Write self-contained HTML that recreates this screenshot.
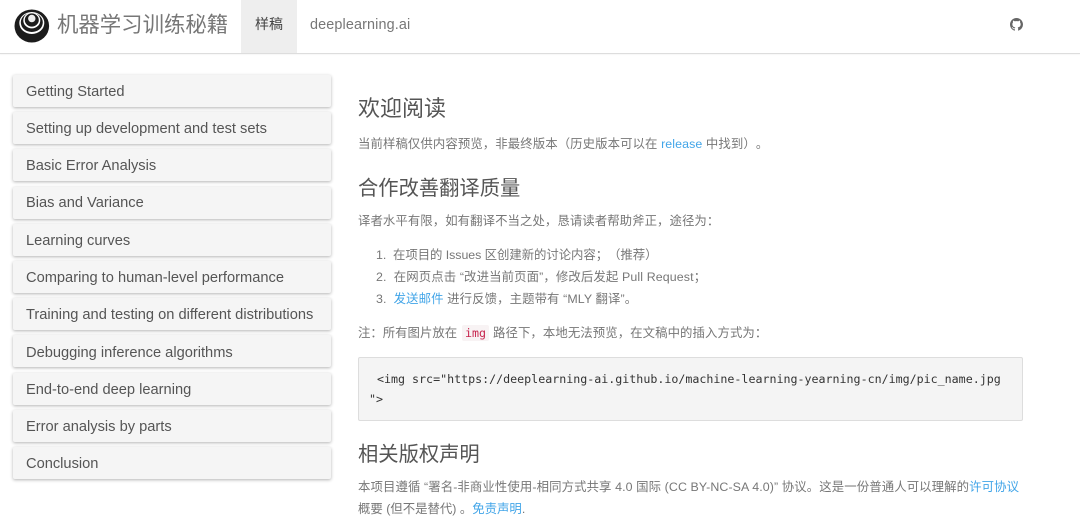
<!DOCTYPE html>
<html lang="zh">
<head>
<meta charset="utf-8">
<title>机器学习训练秘籍</title>
<style>
html,body{margin:0;padding:0;background:#fff;}
body{width:1080px;height:523px;position:relative;overflow:hidden;font-family:"Liberation Sans","Noto Sans CJK SC",sans-serif;color:#666;text-spacing-trim:space-all;filter:blur(.25px);}
.a{position:absolute;white-space:nowrap;}
.nav{left:0;top:0;width:1080px;height:53px;background:#fff;border-bottom:1px solid #ddd;box-shadow:0 1px 1px rgba(0,0,0,.04);}
.tab{left:241px;top:0;width:56px;height:53px;background:#eee;}
.item{left:13px;width:318px;height:32px;background:#f5f5f5;box-shadow:0 1px 3px rgba(0,0,0,.3);border-radius:2px;}
.t{left:26px;font-size:14.65px;line-height:20px;color:#555;}
h1,h2{margin:0;font-weight:400;color:#555;line-height:28px;position:absolute;white-space:nowrap;left:358px;}
h1{font-size:22px;}
h2{font-size:20.3px;}
.p{font-size:12.4px;line-height:18px;left:358px;color:#777;}
a{color:#42a5e8;text-decoration:none;}
.code{left:358px;top:357px;width:663px;height:62px;background:#f4f4f4;border:1px solid #ddd;border-radius:2px;}
.m{font-family:"DejaVu Sans Mono",monospace;font-size:11.65px;line-height:20px;color:#333;}
.img{left:462px;top:325px;width:27px;height:16px;background:#f8f3f4;border-radius:2px;text-align:center;line-height:16px;color:#c7254e;font-family:"DejaVu Sans Mono",monospace;font-size:11.65px;}
</style>
</head>
<body>
<div class="a nav"></div>
<div class="a tab"></div>
<svg class="a" style="left:14px;top:8px" width="36" height="36" viewBox="0 0 36 36">
<ellipse cx="17.8" cy="18" rx="17.3" ry="16.5" fill="#1c1c1c"/>
<ellipse cx="17.8" cy="15" rx="12.5" ry="11" fill="#fff"/>
<ellipse cx="17.8" cy="14.4" rx="11" ry="9.6" fill="#1c1c1c"/>
<ellipse cx="17.8" cy="12.4" rx="8.5" ry="8" fill="#fff"/>
<ellipse cx="17.8" cy="12" rx="7" ry="6.6" fill="#1c1c1c"/>
<circle cx="17.8" cy="10.5" r="3.7" fill="#eee"/>
</svg>
<div class="a" style="left:57px;top:10px;font-size:21.4px;line-height:30px;color:#777;">机器学习训练秘籍</div>
<div class="a" style="left:255px;top:15px;font-size:14px;line-height:18px;color:#444;">样稿</div>
<div class="a" style="left:310px;top:15px;font-size:14.4px;line-height:20px;color:#777;letter-spacing:.13px;">deeplearning.ai</div>
<svg class="a" style="left:1010px;top:17.5px" width="13" height="13" viewBox="0 0 16 16"><path fill="#666" d="M8 0C3.58 0 0 3.58 0 8c0 3.54 2.29 6.53 5.47 7.59.4.07.55-.17.55-.38 0-.19-.01-.82-.01-1.49-2.01.37-2.53-.49-2.69-.94-.09-.23-.48-.94-.82-1.13-.28-.15-.68-.52-.01-.53.63-.01 1.08.58 1.23.82.72 1.21 1.87.87 2.33.66.07-.52.28-.87.51-1.07-1.78-.2-3.64-.89-3.64-3.95 0-.87.31-1.59.82-2.15-.08-.2-.36-1.02.08-2.12 0 0 .67-.21 2.2.82.64-.18 1.32-.27 2-.27s1.36.09 2 .27c1.53-1.04 2.2-.82 2.2-.82.44 1.1.16 1.92.08 2.12.51.56.82 1.27.82 2.15 0 3.07-1.87 3.75-3.65 3.95.29.25.54.73.54 1.48 0 1.07-.01 1.93-.01 2.2 0 .21.15.46.55.38A8.01 8.01 0 0 0 16 8c0-4.42-3.58-8-8-8z"/></svg>

<div class="a item" style="top:75px"></div><div class="a t" style="top:82px">Getting Started</div>
<div class="a item" style="top:112.2px"></div><div class="a t" style="top:119px">Setting up development and test sets</div>
<div class="a item" style="top:149.4px"></div><div class="a t" style="top:156px">Basic Error Analysis</div>
<div class="a item" style="top:186.6px"></div><div class="a t" style="top:193px">Bias and Variance</div>
<div class="a item" style="top:223.8px"></div><div class="a t" style="top:231px">Learning curves</div>
<div class="a item" style="top:261px"></div><div class="a t" style="top:268px">Comparing to human-level performance</div>
<div class="a item" style="top:298.2px"></div><div class="a t" style="top:305px">Training and testing on different distributions</div>
<div class="a item" style="top:335.4px"></div><div class="a t" style="top:343px">Debugging inference algorithms</div>
<div class="a item" style="top:372.6px"></div><div class="a t" style="top:380px">End-to-end deep learning</div>
<div class="a item" style="top:409.8px"></div><div class="a t" style="top:417px">Error analysis by parts</div>
<div class="a item" style="top:447px"></div><div class="a t" style="top:454px">Conclusion</div>

<h1 style="top:95px">欢迎阅读</h1>
<div class="a p" style="top:135px;letter-spacing:.09px">当前样稿仅供内容预览，非最终版本（历史版本可以在 <a>release</a> 中找到）。</div>
<h2 style="top:175px">合作改善翻译质量</h2>
<div class="a p" style="top:212px;letter-spacing:.07px">译者水平有限，如有翻译不当之处，恳请读者帮助斧正，途径为：</div>
<div class="a p" style="top:246px;left:376px;letter-spacing:-.05px">1.&nbsp; 在项目的 Issues 区创建新的讨论内容；（推荐）</div>
<div class="a p" style="top:268px;left:376px;letter-spacing:.12px">2.&nbsp; 在网页点击 “改进当前页面”，修改后发起 Pull Request；</div>
<div class="a p" style="top:290px;left:376px;letter-spacing:.1px">3.&nbsp; <a>发送邮件</a> 进行反馈，主题带有 “MLY 翻译”。</div>
<div class="a p" style="top:324px">注：所有图片放在</div>
<div class="a img">img</div>
<div class="a p" style="top:324px;left:493px;letter-spacing:.08px">路径下，本地无法预览，在文稿中的插入方式为：</div>
<div class="a code"></div>
<div class="a m" style="left:377px;top:369px">&lt;img src="https://deeplearning-ai.github.io/machine-learning-yearning-cn/img/pic_name.jpg</div>
<div class="a m" style="left:369px;top:389px">"&gt;</div>
<h2 style="top:441px">相关版权声明</h2>
<div class="a p" style="top:478px;letter-spacing:.1px">本项目遵循 “署名-非商业性使用-相同方式共享 4.0 国际 (CC BY-NC-SA 4.0)” 协议。这是一份普通人可以理解的<a>许可协议</a></div>
<div class="a p" style="top:500px">概要 (但不是替代) 。<a>免责声明</a>.</div>
</body>
</html>
